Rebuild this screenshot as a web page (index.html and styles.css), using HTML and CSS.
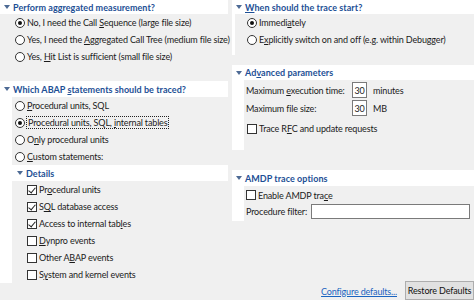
FILE: index.html
```html
<!DOCTYPE html>
<html>
<head>
<meta charset="utf-8">
<title>Trace Parameters</title>
<link rel="stylesheet" href="styles.css">
</head>
<body>
<div class="page">
  <div class="col">
    <section class="sec sec-measure">
      <div class="sec-head"><span class="twisty"></span><span>Perform aggregated measurement?</span></div>
      <div class="sec-body">
        <div class="opt"><span class="radio on"></span><span>No, I need the Call <u>S</u>equence (large file size)</span></div>
        <div class="opt"><span class="radio"></span><span>Yes, I need the <u>A</u>ggregated Call Tree (medium file size)</span></div>
        <div class="opt"><span class="radio"></span><span>Yes, <u>H</u>it List is sufficient (small file size)</span></div>
      </div>
    </section>

    <section class="sec sec-statements">
      <div class="sec-head head-tall"><span class="twisty"></span><span>Which ABAP <u>s</u>tatements should be traced?</span></div>
      <div class="sec-body inset">
        <div class="opt"><span class="radio"></span><span><u>P</u>rocedural units, SQL</span></div>
        <div class="opt"><span class="radio on"></span><span class="focus">Procedural units, SQL, <u>i</u>nternal tables</span></div>
        <div class="opt"><span class="radio"></span><span>O<u>n</u>ly procedural units</span></div>
        <div class="opt"><span class="radio"></span><span><u>C</u>ustom statements:</span></div>
        <section class="sec sub">
          <div class="sec-head sub-head"><span class="twisty"></span><span>Details</span></div>
          <div class="sec-body sub-body">
            <div class="opt"><span class="check on"></span><span>Pr<u>o</u>cedural units</span></div>
            <div class="opt"><span class="check on"></span><span>S<u>Q</u>L database access</span></div>
            <div class="opt"><span class="check on"></span><span>Access to internal tab<u>l</u>es</span></div>
            <div class="opt"><span class="check"></span><span><u>D</u>ynpro events</span></div>
            <div class="opt"><span class="check"></span><span>Other A<u>B</u>AP events</span></div>
            <div class="opt"><span class="check"></span><span>S<u>y</u>stem and kernel events</span></div>
          </div>
        </section>
      </div>
    </section>
  </div>

  <div class="col">
    <section class="sec sec-when">
      <div class="sec-head"><span class="twisty"></span><span><u>W</u>hen should the trace start?</span></div>
      <div class="sec-body thin">
        <div class="opt"><span class="radio on"></span><span>Immedi<u>a</u>tely</span></div>
        <div class="opt"><span class="radio"></span><span>E<u>x</u>plicitly switch on and off (e.g. within Debugger)</span></div>
      </div>
    </section>

    <section class="sec sec-adv">
      <div class="sec-head"><span class="twisty"></span><span>Ad<u>v</u>anced parameters</span></div>
      <div class="sec-body inset adv-body">
        <div class="param"><span class="plabel">Maximum <u>e</u>xecution time:</span><span class="num">30</span><span>minutes</span></div>
        <div class="param"><span class="plabel">Maximum file size:</span><span class="num">30</span><span>MB</span></div>
        <div class="opt opt-rfc"><span class="check"></span><span>Trace R<u>F</u>C and update requests</span></div>
      </div>
    </section>

    <section class="sec sec-amdp">
      <div class="sec-head head-tall"><span class="twisty"></span><span>AMDP trace options</span></div>
      <div class="sec-body inset amdp-body">
        <div class="opt"><span class="check"></span><span>Enable AMDP tra<u>c</u>e</span></div>
        <div class="filter"><span class="flabel">Procedure filter:</span><span class="field"></span></div>
      </div>
    </section>

    <div class="footer">
      <a class="link">Configure defaults...</a>
      <span class="button">Restore Defaults</span>
    </div>
  </div>
</div>
</body>
</html>
```

FILE: styles.css
```css
* { box-sizing: border-box; }

html, body {
  margin: 0;
  padding: 0;
}

body {
  width: 474px;
  height: 300px;
  overflow: hidden;
  background: #f0f0f0;
  font-family: Lato, "Liberation Sans", sans-serif;
  font-size: 9px;
  letter-spacing: -0.15px;
  color: #1b1b1b;
}

u {
  text-decoration: underline;
  text-underline-offset: 1px;
}

.page {
  display: grid;
  grid-template-columns: 228px 242px;
  column-gap: 4px;
  height: 300px;
}

.col {
  display: flex;
  flex-direction: column;
}

.sec {
  background: #ffffff;
}

.sec-head {
  height: 14px;
  display: flex;
  align-items: center;
  padding-left: 4px;
  font-weight: bold;
  letter-spacing: 0.05px;
  color: #1d4f95;
  white-space: nowrap;
}

.head-tall {
  height: 16px;
}

.twisty {
  width: 0;
  height: 0;
  border-left: 3px solid transparent;
  border-right: 3px solid transparent;
  border-top: 4px solid #4d6a94;
  margin-right: 3px;
}

.sec-body {
  background: #f0f0f0;
  display: flex;
  flex-direction: column;
}

.opt {
  height: 17px;
  display: flex;
  align-items: center;
  gap: 2px;
  white-space: nowrap;
}

.radio {
  width: 10px;
  height: 10px;
  border: 1px solid #333333;
  border-radius: 50%;
  background: #ffffff;
  display: flex;
  align-items: center;
  justify-content: center;
  flex: none;
}

.radio.on::after {
  content: "";
  width: 4px;
  height: 4px;
  border-radius: 50%;
  background: #111111;
}

.check {
  width: 10px;
  height: 10px;
  border: 1px solid #333333;
  background: #ffffff;
  flex: none;
  position: relative;
}

.check.on::after {
  content: "";
  position: absolute;
  left: 2px;
  top: 0px;
  width: 3px;
  height: 6px;
  border-right: 1px solid #222222;
  border-bottom: 1px solid #222222;
  transform: rotate(40deg);
}

.focus {
  outline: 1px dotted #222222;
  outline-offset: 0px;
  padding: 0 1px;
}

/* left column */
.sec-measure {
  margin-bottom: 15px;
}

.sec-measure .sec-body {
  padding-left: 15px;
  padding-bottom: 1px;
}

.inset {
  margin-left: 12px;
}

.sec-statements > .sec-body {
  padding-left: 0;
}

.sec-statements > .sec-body > .opt {
  padding-left: 3px;
}

.sub-head {
  height: 16px;
  padding-left: 5px;
}

.sub-body {
  padding-left: 15px;
}

/* right column */
.thin {
  margin-left: 3px;
  padding-left: 12px;
  padding-bottom: 7px;
}

.sec-when {
  margin-bottom: 10px;
}

.sec-adv .sec-head {
  height: 15px;
}

.adv-body {
  padding: 2px 0 13px 2px;
}

.sec-adv {
  margin-bottom: 20px;
}

.param {
  height: 16px;
  display: flex;
  align-items: center;
  margin-bottom: 2px;
  white-space: nowrap;
}

.plabel {
  width: 106px;
}

.num {
  width: 15px;
  height: 16px;
  border: 1px solid #7a7a7a;
  background: #ffffff;
  display: flex;
  align-items: center;
  justify-content: center;
  margin-right: 6px;
}

.opt-rfc {
  margin-top: 2px;
  padding-left: 1px;
}

.amdp-body {
  padding: 1px 0 1px 2px;
}

.amdp-body .opt {
  height: 16px;
}

.filter {
  height: 17px;
  display: flex;
  align-items: center;
  white-space: nowrap;
}

.flabel {
  width: 65px;
}

.field {
  width: 159px;
  height: 15px;
  border: 1px solid #7a7a7a;
  background: #ffffff;
}

.footer {
  margin-top: auto;
  height: 20px;
  display: flex;
  align-items: center;
  justify-content: flex-end;
  gap: 8px;
}

.link {
  color: #1a64c0;
  text-decoration: underline;
  margin-top: 2px;
}

.button {
  width: 69px;
  height: 19px;
  display: flex;
  align-items: center;
  justify-content: center;
  background: #e1e1e1;
  border: 1px solid #adadad;
  color: #111111;
  white-space: nowrap;
}
```
